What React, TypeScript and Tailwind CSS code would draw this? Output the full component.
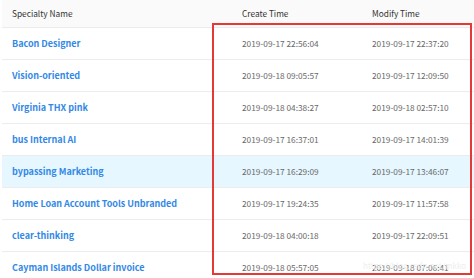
const rows = [
  { name: 'Bacon Designer', created: '2019-09-17 22:56:04', modified: '2019-09-17 22:37:20' },
  { name: 'Vision-oriented', created: '2019-09-18 09:05:57', modified: '2019-09-17 12:09:50' },
  { name: 'Virginia THX pink', created: '2019-09-18 04:38:27', modified: '2019-09-18 02:57:10' },
  { name: 'bus Internal AI', created: '2019-09-17 16:37:01', modified: '2019-09-17 14:01:39' },
  { name: 'bypassing Marketing', created: '2019-09-17 16:29:09', modified: '2019-09-17 13:46:07', active: true },
  { name: 'Home Loan Account Tools Unbranded', created: '2019-09-17 19:24:35', modified: '2019-09-17 11:57:58' },
  { name: 'clear-thinking', created: '2019-09-18 04:00:18', modified: '2019-09-17 22:09:51' },
  { name: 'Cayman Islands Dollar invoice', created: '2019-09-18 05:57:05', modified: '2019-09-18 07:06:41' },
]

export default function App() {
  return (
    <div className="relative h-[278px] w-[474px] overflow-hidden bg-white pl-[2px] font-['Noto_Sans_CJK_SC',sans-serif] text-[8.3px]">
      <div className="flex h-[28px] items-center border-b border-[#ececec] bg-[#fafafa] text-[#333]">
        <div className="w-[230px] pl-[10px]">Specialty Name</div>
        <div className="w-[130px] pl-[10px]">Create Time</div>
        <div className="pl-[10px]">Modify Time</div>
      </div>
      {rows.map((r) => (
        <div
          key={r.name}
          className={`flex h-[32px] items-center border-b border-[#ececec] ${r.active ? 'bg-[#e6f7ff]' : ''}`}
        >
          <div className="w-[230px] whitespace-nowrap pl-[10px] text-[9px] font-bold text-[#3288e6]">{r.name}</div>
          <div className="w-[130px] whitespace-nowrap pl-[10px] text-[#6a6a6a]">{r.created}</div>
          <div className="whitespace-nowrap pl-[10px] text-[#6a6a6a]">{r.modified}</div>
        </div>
      ))}
      <div className="absolute left-[212px] top-[23px] h-[252px] w-[260px] border-2 border-[#e53935]" />
      <div className="absolute bottom-[6px] right-[8px] text-[8px] text-[#eeeeee]">https://blog.csdn.net/mkko</div>
    </div>
  )
}
